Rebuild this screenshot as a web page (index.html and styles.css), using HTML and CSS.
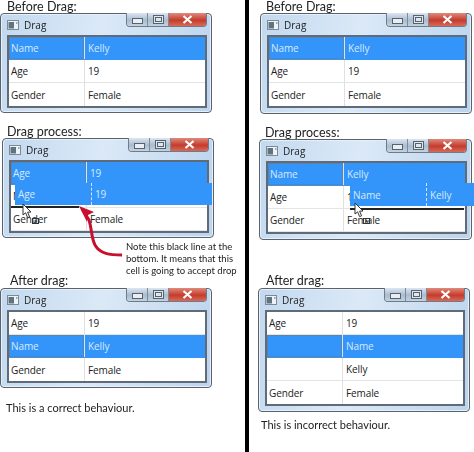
FILE: index.html
```html
<!DOCTYPE html>
<html lang="en">

<head>
    <meta charset="UTF-8">
    <title>Drag behaviour</title>
    <link rel="stylesheet" href="styles.css">
</head>

<body>
    <svg class="defs" width="0" height="0">
        <symbol id="appIcon" viewBox="0 0 12 10">
            <rect x="0.5" y="0.5" width="11" height="9" fill="#eef3f7" stroke="#7d8a94"/>
            <rect x="1.5" y="2" width="5.5" height="6.5" fill="#5f7480"/>
            <rect x="9" y="2" width="1.5" height="2" fill="#9aa8b2"/>
        </symbol>
        <symbol id="closeIcon" viewBox="0 0 11 9">
            <path d="M1.5 1 L9.5 8 M9.5 1 L1.5 8" fill="none" stroke="#fff" stroke-width="2.2"/>
        </symbol>
        <symbol id="cursor" viewBox="0 0 11 16">
            <path d="M1 1 L1 12 L3.6 9.8 L5.6 14.6 L7.6 13.8 L5.6 9.2 L9 9 Z" fill="#fff" stroke="#333" stroke-width="1"/>
        </symbol>
        <symbol id="dropBox" viewBox="0 0 7 6">
            <rect x="0.5" y="0.5" width="6" height="5" fill="none" stroke="#333"/>
            <path d="M2 3 H5 M3.5 1.5 V4.5" stroke="#333" stroke-width="0.8"/>
        </symbol>
    </svg>

    <div class="page">
        <div class="col col-left">
            <p class="caption cap-a">Before Drag:</p>
            <div class="window win-a">
                <div class="titlebar">
                    <svg class="app-icon"><use href="#appIcon"/></svg>
                    <span class="win-title">Drag</span>
                    <div class="controls"><span class="btn btn-min"></span><span class="btn btn-max"></span><span class="btn btn-close"><svg class="close-icon"><use href="#closeIcon"/></svg></span></div>
                </div>
                <div class="grid">
                    <div class="row selected"><div class="cell first">Name</div><div class="cell">Kelly</div></div>
                    <div class="row"><div class="cell first">Age</div><div class="cell">19</div></div>
                    <div class="row"><div class="cell first">Gender</div><div class="cell">Female</div></div>
                </div>
            </div>

            <p class="caption cap-b">Drag process:</p>
            <div class="window win-b">
                <div class="titlebar">
                    <svg class="app-icon"><use href="#appIcon"/></svg>
                    <span class="win-title">Drag</span>
                    <div class="controls"><span class="btn btn-min"></span><span class="btn btn-max"></span><span class="btn btn-close"><svg class="close-icon"><use href="#closeIcon"/></svg></span></div>
                </div>
                <div class="grid">
                    <div class="row selected"><div class="cell first">Age</div><div class="cell">19</div></div>
                    <div class="row"><div class="cell first">Name</div><div class="cell">Kelly</div></div>
                    <div class="row"><div class="cell first">Gender</div><div class="cell">Female</div></div>
                    <div class="drop-line line-left"></div>
                    <div class="ghost ghost-left"><div class="cell ghost-first">Age</div><div class="cell">19</div></div>
                    <svg class="cursor cursor-left"><use href="#cursor"/></svg>
                    <svg class="drop-box box-left"><use href="#dropBox"/></svg>
                </div>
            </div>

            <p class="note">Note this black line at the<br>bottom. It means that this<br>cell is going to accept drop</p>

            <p class="caption cap-c">After drag:</p>
            <div class="window win-c">
                <div class="titlebar">
                    <svg class="app-icon"><use href="#appIcon"/></svg>
                    <span class="win-title">Drag</span>
                    <div class="controls"><span class="btn btn-min"></span><span class="btn btn-max"></span><span class="btn btn-close"><svg class="close-icon"><use href="#closeIcon"/></svg></span></div>
                </div>
                <div class="grid">
                    <div class="row"><div class="cell first">Age</div><div class="cell">19</div></div>
                    <div class="row selected"><div class="cell first">Name</div><div class="cell">Kelly</div></div>
                    <div class="row"><div class="cell first">Gender</div><div class="cell">Female</div></div>
                </div>
            </div>

            <p class="caption result cap-d">This is a correct behaviour.</p>

            <svg class="arrow" width="60" height="60" viewBox="0 0 60 60">
                <path d="M46 50 C34 50 24 49 19 40 C15 32 16 24 13 15 L6 4" fill="none" stroke="#c8102e" stroke-width="3"/>
                <path d="M3 1 L18 7 L12 10 L11 17 Z" fill="#c8102e"/>
            </svg>
        </div>

        <div class="col col-right">
            <p class="caption cap-e">Before Drag:</p>
            <div class="window win-e">
                <div class="titlebar">
                    <svg class="app-icon"><use href="#appIcon"/></svg>
                    <span class="win-title">Drag</span>
                    <div class="controls"><span class="btn btn-min"></span><span class="btn btn-max"></span><span class="btn btn-close"><svg class="close-icon"><use href="#closeIcon"/></svg></span></div>
                </div>
                <div class="grid">
                    <div class="row selected"><div class="cell first">Name</div><div class="cell">Kelly</div></div>
                    <div class="row"><div class="cell first">Age</div><div class="cell">19</div></div>
                    <div class="row"><div class="cell first">Gender</div><div class="cell">Female</div></div>
                </div>
            </div>

            <p class="caption cap-f">Drag process:</p>
            <div class="window win-f">
                <div class="titlebar">
                    <svg class="app-icon"><use href="#appIcon"/></svg>
                    <span class="win-title">Drag</span>
                    <div class="controls"><span class="btn btn-min"></span><span class="btn btn-max"></span><span class="btn btn-close"><svg class="close-icon"><use href="#closeIcon"/></svg></span></div>
                </div>
                <div class="grid">
                    <div class="row selected"><div class="cell first">Name</div><div class="cell">Kelly</div></div>
                    <div class="row"><div class="cell first">Age</div><div class="cell">19</div></div>
                    <div class="row"><div class="cell first">Gender</div><div class="cell">Female</div></div>
                    <div class="drop-line line-right"></div>
                    <div class="ghost ghost-right"><div class="cell ghost-first">Name</div><div class="cell">Kelly</div></div>
                    <svg class="cursor cursor-right"><use href="#cursor"/></svg>
                    <svg class="drop-box box-right"><use href="#dropBox"/></svg>
                </div>
            </div>

            <p class="caption cap-g">After drag:</p>
            <div class="window win-g">
                <div class="titlebar">
                    <svg class="app-icon"><use href="#appIcon"/></svg>
                    <span class="win-title">Drag</span>
                    <div class="controls"><span class="btn btn-min"></span><span class="btn btn-max"></span><span class="btn btn-close"><svg class="close-icon"><use href="#closeIcon"/></svg></span></div>
                </div>
                <div class="grid">
                    <div class="row"><div class="cell first">Age</div><div class="cell">19</div></div>
                    <div class="row selected"><div class="cell first"></div><div class="cell">Name</div></div>
                    <div class="row"><div class="cell first"></div><div class="cell">Kelly</div></div>
                    <div class="row"><div class="cell first">Gender</div><div class="cell">Female</div></div>
                </div>
            </div>

            <p class="caption result cap-h">This is incorrect behaviour.</p>
        </div>
    </div>
</body>

</html>
```

FILE: styles.css
```css
* {
    padding: 0;
    margin: 0;
    box-sizing: border-box;
}

body {
    background-color: #fff;
    color: #222;
    font-family: "Open Sans", Arial, sans-serif;
    overflow: hidden;
}

.defs {
    display: block;
    height: 0;
}

.page {
    display: flex;
    width: 474px;
    height: 452px;
    overflow: hidden;
    filter: blur(0.3px);
}

.col {
    position: relative;
}

.col-left {
    width: 245px;
}

.col-right {
    flex: 1;
    border-left: 4px solid #000;
}

/* captions */

.caption {
    font-family: Lato, Arial, sans-serif;
    font-size: 12.5px;
    line-height: 14px;
    height: 13px;
    white-space: nowrap;
}

.result {
    font-size: 11px;
}

.cap-a { margin-left: 7px; }
.cap-b { margin: 12px 0 0 7px; }
.cap-c { margin: -3px 0 0 10px; }
.cap-d { margin: 13px 0 0 6px; }
.cap-e { margin-left: 17px; }
.cap-f { margin: 12px 0 0 16px; }
.cap-g { margin: 34px 0 0 17px; }
.cap-h { margin: 6px 0 0 12px; }

.note {
    margin: 3px 0 0 126px;
    font-family: Lato, Arial, sans-serif;
    font-size: 9.5px;
    line-height: 12px;
    white-space: nowrap;
}

/* windows */

.window {
    width: 212px;
    height: 100px;
    padding: 0 4px 0 6px;
    background: linear-gradient(100deg, #c3d9ef 0%, #dbe9f7 45%, #bcd4ec 100%);
    border: 1px solid #5b6269;
    border-radius: 4px;
    box-shadow: inset 0 0 0 1px #e6f0fa;
}

.win-b { margin: 0 0 0 2px; }
.win-c { margin-top: 1px; }
.win-e { margin-left: 11px; height: 101px; }
.win-f { margin-left: 10px; width: 213px; height: 101px; }
.win-g { margin: 1px 0 0 9px; height: 124px; }

.titlebar {
    display: flex;
    align-items: center;
    height: 21px;
    padding-top: 1px;
}

.app-icon {
    width: 12px;
    height: 10px;
    flex-shrink: 0;
}

.win-title {
    margin-left: 5px;
    font-size: 10px;
}

.controls {
    display: flex;
    align-self: flex-start;
    height: 14px;
    margin: -2px 0 0 auto;
    border: 1px solid #6f7b87;
    border-top: none;
    border-radius: 0 0 4px 4px;
    overflow: hidden;
}

.btn {
    display: flex;
    align-items: center;
    justify-content: center;
    width: 21px;
    background: linear-gradient(#dbe6f1, #a9bccf 55%, #c5d3e0);
    border-right: 1px solid #7f8b97;
}

.btn-min::before {
    content: "";
    width: 9px;
    height: 4px;
    margin-top: 3px;
    background: #e8eef4;
    border: 1px solid #56626e;
}

.btn-max::before {
    content: "";
    width: 9px;
    height: 7px;
    background: #dfe7ee;
    border: 1px solid #56626e;
    box-shadow: inset 0 0 0 1px #dfe7ee, inset 0 0 0 2px #56626e;
}

.btn-close {
    width: 37px;
    border-right: none;
    background: linear-gradient(#e08a7c, #c43c2c 55%, #d8695a);
}

.close-icon {
    width: 11px;
    height: 9px;
}

/* grid */

.grid {
    position: relative;
    border: 2px solid #5f6b78;
    background-color: #fff;
}

.row {
    display: flex;
    height: 23px;
    border-bottom: 1px solid #e4e4e4;
    font-size: 10px;
    letter-spacing: -0.1px;
}

.row:last-of-type {
    border-bottom: none;
}

.cell {
    display: flex;
    align-items: center;
    padding-left: 3px;
    flex: 1;
    white-space: nowrap;
}

.first {
    flex: 0 0 76px;
    padding-left: 2px;
    border-right: 1px solid #e0e0e0;
}

.selected {
    background-color: #3394fa;
    color: #d6eaff;
    border-bottom-color: #3394fa;
}

.selected .first {
    border-right-color: #d6e6f6;
    box-shadow: inset 0 0 0 1px #5c83ac;
}

/* things floating over the grid while dragging */

.drop-line {
    position: absolute;
    height: 1.5px;
    background-color: #222;
}

.line-left {
    left: 0;
    width: 68px;
    top: 44px;
}

.line-right {
    left: 82px;
    right: 1px;
    top: 45px;
}

.ghost {
    position: absolute;
    display: flex;
    height: 22px;
    background-color: #3394fa;
    color: #d6eaff;
    font-size: 10px;
    letter-spacing: -0.1px;
}

.ghost-first {
    flex: 0 0 77px;
    border-right: 1px dashed #d6e6f6;
}

.ghost-left {
    left: 4px;
    top: 21px;
    width: 197px;
}

.ghost-right {
    left: 82px;
    top: 20px;
    width: 124px;
    height: 23px;
}

.cursor {
    position: absolute;
    width: 11px;
    height: 16px;
}

.cursor-left { left: 11px; top: 41px; }
.cursor-right { left: 86px; top: 39px; }

.drop-box {
    position: absolute;
    width: 7px;
    height: 6px;
}

.box-left { left: 21px; top: 56px; }
.box-right { left: 95px; top: 55px; }

.arrow {
    position: absolute;
    left: 76px;
    top: 205px;
}
```
